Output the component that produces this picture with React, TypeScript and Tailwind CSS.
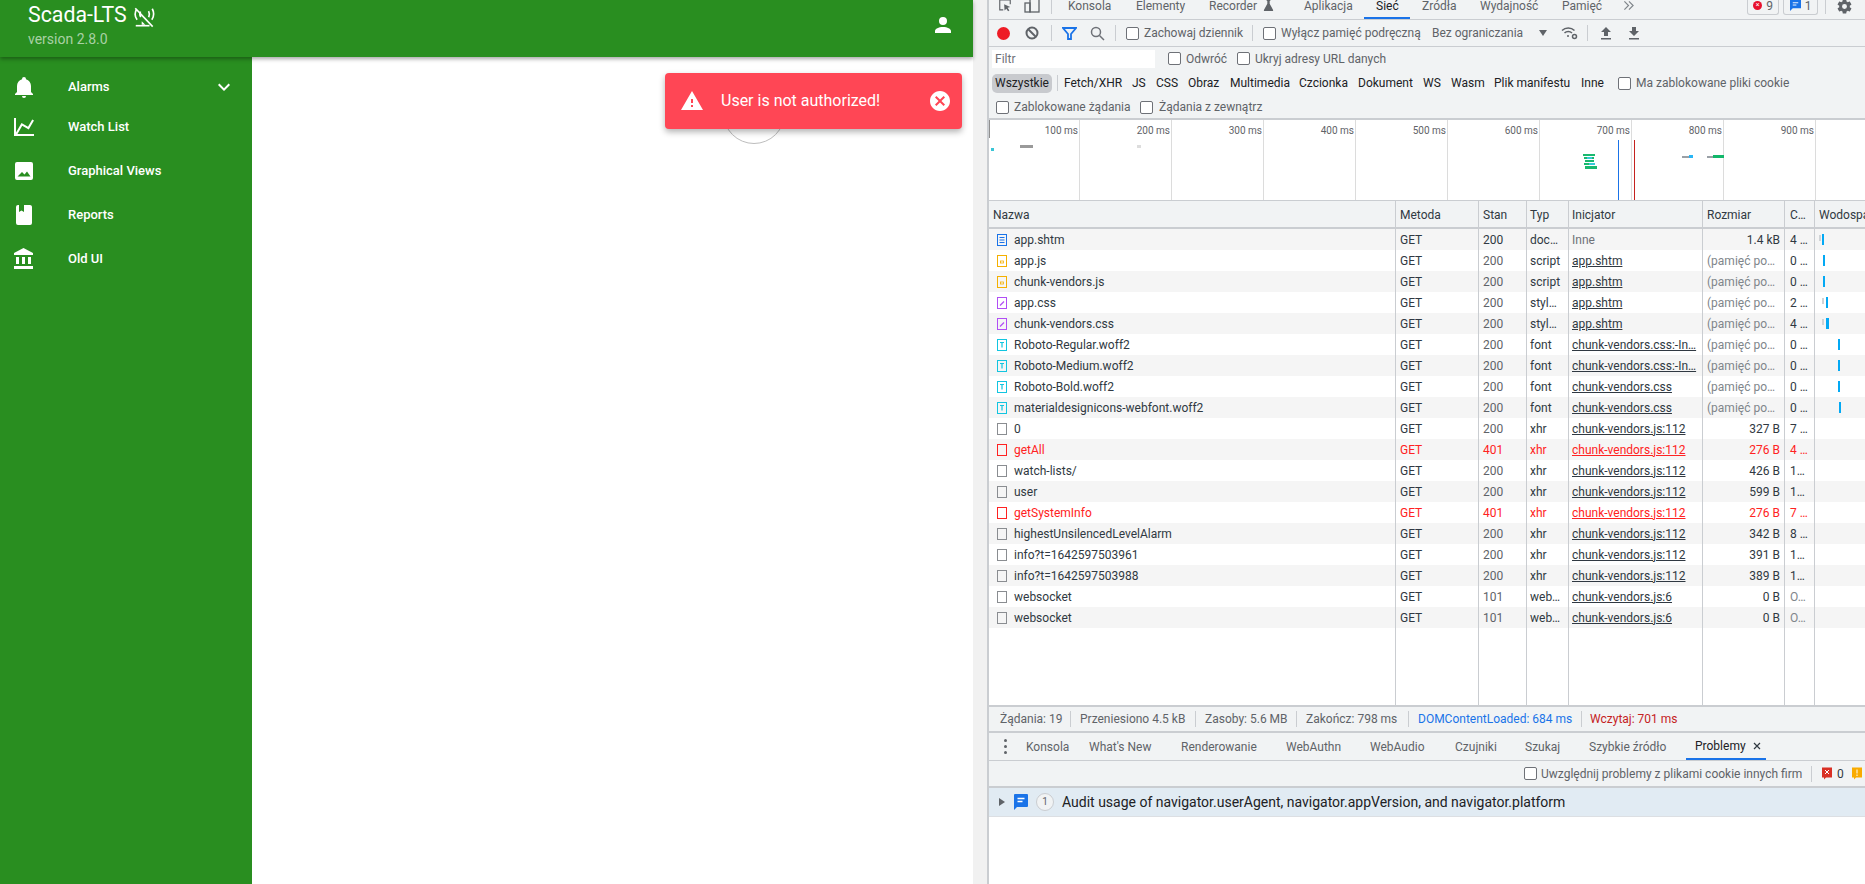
import type { ReactNode } from 'react';

// mdi paths
const mdi = {
  bell: 'M21,19V20H3V19L5,17V11C5,7.9 7.03,5.17 10,4.29C10,4.19 10,4.1 10,4A2,2 0 0,1 12,2A2,2 0 0,1 14,4C14,4.1 14,4.19 14,4.29C16.97,5.17 19,7.9 19,11V17L21,19M14,21A2,2 0 0,1 12,23A2,2 0 0,1 10,21',
  chart: 'M16,11.78L20.24,4.45L21.97,5.45L16.74,14.5L10.23,10.75L5.46,19H22V21H2V3H4V17.54L9.5,8L16,11.78Z',
  image: 'M19 3a2 2 0 0 1 2 2v14a2 2 0 0 1-2 2H5a2 2 0 0 1-2-2V5a2 2 0 0 1 2-2h14zM5.500 17.500h13l-3.500-5-2.500 3-2.500-2.500z',
  book: 'M18,22A2,2 0 0,0 20,20V4C20,2.89 19.1,2 18,2H12V9L9.5,7.5L7,9V2H6A2,2 0 0,0 4,4V20A2,2 0 0,0 6,22H18Z',
  bank: 'M11.5,1L2,6V8H21V6M16,10V17H19V10M2,22H21V19H2M10,10V17H13V10M4,10V17H7V10H4Z',
  account: 'M12,4A4,4 0 0,1 16,8A4,4 0 0,1 12,12A4,4 0 0,1 8,8A4,4 0 0,1 12,4M12,14C16.42,14 20,15.79 20,18V20H4V18C4,15.79 7.58,14 12,14Z',
  alert: 'M13,14H11V10H13M13,18H11V16H13M1,21H23L12,2L1,21Z',
  closeCircle: 'M12,2C17.53,2 22,6.47 22,12C22,17.53 17.53,22 12,22C6.47,22 2,17.53 2,12C2,6.47 6.47,2 12,2M15.59,7L12,10.59L8.41,7L7,8.41L10.59,12L7,15.59L8.41,17L12,13.41L15.59,17L17,15.59L13.41,12L17,8.41L15.59,7Z',
  chevron: 'M7.41,8.58L12,13.17L16.59,8.58L18,10L12,16L6,10L7.41,8.58Z',
  cog: 'M12,15.5A3.5,3.5 0 0,1 8.5,12A3.5,3.5 0 0,1 12,8.5A3.5,3.5 0 0,1 15.5,12A3.5,3.5 0 0,1 12,15.5M19.43,12.97C19.47,12.65 19.5,12.33 19.5,12C19.5,11.67 19.47,11.34 19.43,11L21.54,9.37C21.73,9.22 21.78,8.95 21.66,8.73L19.66,5.27C19.54,5.05 19.27,4.96 19.05,5.05L16.56,6.05C16.04,5.66 15.5,5.32 14.87,5.07L14.5,2.42C14.46,2.18 14.25,2 14,2H10C9.75,2 9.54,2.18 9.5,2.42L9.13,5.07C8.5,5.32 7.96,5.66 7.44,6.05L4.95,5.05C4.73,4.96 4.46,5.05 4.34,5.27L2.34,8.73C2.21,8.95 2.27,9.22 2.46,9.37L4.57,11C4.53,11.34 4.5,11.67 4.5,12C4.5,12.33 4.53,12.65 4.57,12.97L2.46,14.63C2.27,14.78 2.21,15.05 2.34,15.27L4.34,18.73C4.46,18.95 4.73,19.03 4.95,18.95L7.44,17.94C7.96,18.34 8.5,18.68 9.13,18.93L9.5,21.58C9.54,21.82 9.75,22 10,22H14C14.25,22 14.46,21.82 14.5,21.58L14.87,18.93C15.5,18.67 16.04,18.34 16.56,17.94L19.05,18.95C19.27,19.03 19.54,18.95 19.66,18.73L21.66,15.27C21.78,15.05 21.73,14.78 21.54,14.63L19.43,12.97Z',
};

function Mdi({ d, className }: { d: string; className?: string }) {
  return (
    <svg viewBox="0 0 24 24" fill="currentColor" className={className}>
      <path d={d} />
    </svg>
  );
}

function Check({ className = '' }: { className?: string }) {
  return <span className={`size-[13px] shrink-0 rounded-[2px] border border-[#6e7177] bg-white ${className}`} />;
}

function Sep({ className = '' }: { className?: string }) {
  return <span className={`h-4 w-px shrink-0 bg-[#cacdd1] ${className}`} />;
}

const navItems = [
  { icon: mdi.bell, label: 'Alarms', h: 'h-[40px]', arrow: true },
  { icon: mdi.chart, label: 'Watch List', h: 'h-[40px] mb-[2px]' },
  { icon: mdi.image, label: 'Graphical Views', h: 'h-[44px]' },
  { icon: mdi.book, label: 'Reports', h: 'h-[44px]' },
  { icon: mdi.bank, label: 'Old UI', h: 'h-[44px]' },
];

function ScadaPage() {
  return (
    <div className="flex w-[973px] shrink-0 flex-col bg-white">
      <header className="relative z-10 flex h-[57px] shrink-0 items-start justify-between bg-[#298e20] pl-[28px] pr-[18px] text-white shadow-[0_2px_4px_rgba(0,0,0,0.35)]">
        <div>
          <div className="flex h-[30px] items-center text-[21.3px] leading-[30px]">
            Scada-LTS
            <svg viewBox="0 0 24 24" className="ml-[6px] mt-[3px] size-[22px]" fill="none" stroke="currentColor" strokeWidth="1.800">
              <path d="M2.500 2.500l19 20" />
              <path d="M4 3.500c-2.200 3.500-2 8 .5 11.500" />
              <path d="M21 3c2 3.800 1.800 8.500-.5 12" />
              <path d="M17 5.500c1.200 2.300 1.200 4.500.2 6.800" />
              <path d="M8.200 6c-1 2-1 4 .3 6" />
              <path d="M3 21.500h15" />
              <path d="M9.500 20.500v-4l4 4z" fill="currentColor" stroke="none" />
            </svg>
          </div>
          <div className="mt-px text-[14px] leading-[16px] text-white/60">version 2.8.0</div>
        </div>
        <Mdi d={mdi.account} className="mt-[13px] size-6" />
      </header>

      <div className="flex flex-1">
        <nav className="w-[252px] shrink-0 bg-[#298e20] pt-[10px] text-white">
          {navItems.map((item) => (
            <div key={item.label} className={`flex items-center ${item.h}`}>
              <Mdi d={item.icon} className="ml-[12px] size-6 shrink-0" />
              <span className="ml-[32px] flex-1 text-[13px] font-medium">{item.label}</span>
              {item.arrow && <Mdi d={mdi.chevron} className="mr-[16px] size-6" />}
            </div>
          ))}
        </nav>

        <main className="relative flex-1 pl-[471px] pt-[25px]">
          <div className="size-[62px] rounded-full border border-[#bdbdbd]" />
          <div className="absolute left-[413px] top-[16px] flex h-[56px] w-[297px] items-center rounded bg-[#ff4655] text-white shadow-[0_3px_6px_rgba(0,0,0,0.3)]">
            <Mdi d={mdi.alert} className="ml-[15px] size-6 shrink-0" />
            <span className="ml-[17px] flex-1 text-[16px]">User is not authorized!</span>
            <Mdi d={mdi.closeCircle} className="mr-[10px] size-6 shrink-0" />
          </div>
        </main>
      </div>
    </div>
  );
}

function DevTab({ className, children }: { className: string; children: ReactNode }) {
  return <span className={`flex h-[19px] shrink-0 items-start leading-[12px] ${className}`}>{children}</span>;
}

function TopTabs() {
  return (
    <div className="flex h-[20px] shrink-0 items-start overflow-hidden border-b border-[#cacdd1] pl-[9px] text-[#5f6368]">
      <svg viewBox="0 0 16 16" className="mr-[12px] size-[14px] shrink-0 -translate-y-[1px]" fill="none" stroke="#5f6368" strokeWidth="1.3">
        <path d="M6 12.5H2V1h12v5" strokeDasharray="none" />
        <path d="M7 6l7 3-3 1 2 3-1.500 1-2-3-2 2z" fill="#5f6368" stroke="none" />
      </svg>
      <svg viewBox="0 0 16 16" className="mr-[11px] size-[16px] shrink-0 -translate-y-[2px]" fill="none" stroke="#5f6368" strokeWidth="1.3">
        <rect x="6" y="0" width="9" height="14" />
        <rect x="1" y="5" width="5" height="9" />
      </svg>
      <Sep className="mr-[16px] h-[14px]" />
      <DevTab className="w-[68px]">Konsola</DevTab>
      <DevTab className="w-[73px]">Elementy</DevTab>
      <DevTab className="w-[95px]">
        Recorder
        <svg viewBox="0 0 12 12" className="ml-[6px] size-[11px]" fill="#5f6368">
          <path d="M4 0h4v1H7.300v3L11 11v1H1v-1l3.700-7V1H4z" />
        </svg>
      </DevTab>
      <DevTab className="w-[60px]">Aplikacja</DevTab>
      <DevTab className="w-[46px] border-b-2 border-[#1a73e8] pl-[12px] text-[#202124]">Sieć</DevTab>
      <DevTab className="w-[70px] pl-[12px]">Źródła</DevTab>
      <DevTab className="w-[82px]">Wydajność</DevTab>
      <DevTab className="w-[61px]">Pamięć</DevTab>
      <DevTab className="w-[124px] text-[#8a8d91]">
        <svg viewBox="0 0 12 12" className="size-[11px]" fill="none" stroke="#80868b" strokeWidth="1.300">
          <path d="M1.500 1.500L6 6l-4.500 4.500M6.500 1.500L11 6l-4.500 4.500" />
        </svg>
      </DevTab>
      <span className="flex h-[15px] w-[32px] shrink-0 items-start justify-center gap-[4px] rounded-b-[3px] border border-t-0 border-[#cacdd1] leading-[12px]">
        <span className="mt-[1px] flex size-[9px] items-center justify-center rounded-full bg-[#e8112d] text-[7px] leading-none text-white">×</span>
        9
      </span>
      <span className="ml-[4px] flex h-[15px] w-[35px] shrink-0 items-start justify-center gap-[4px] rounded-b-[3px] border border-t-0 border-[#cacdd1] leading-[12px]">
        <svg viewBox="0 0 12 12" className="size-[11px]">
          <path d="M0 0h12v9H3l-3 3z" fill="#1a73e8" />
          <path d="M3 3h6M3 5.500h4" stroke="#fff" />
        </svg>
        1
      </span>
      <Sep className="ml-[7px] mr-[10px] h-[14px]" />
      <Mdi d={mdi.cog} className="size-[17px] -translate-y-[2px] text-[#5f6368]" />
    </div>
  );
}

function RecordBar() {
  return (
    <div className="flex h-[27px] shrink-0 items-center border-b border-[#cacdd1] pl-[8px] text-[#5f6368]">
      <span className="size-[13px] shrink-0 rounded-full bg-[#ee1c25]" />
      <svg viewBox="0 0 14 14" className="ml-[15px] size-[14px] shrink-0" fill="none" stroke="#5f6368" strokeWidth="2">
        <circle cx="7" cy="7" r="5.500" />
        <path d="M3 3l8 8" />
      </svg>
      <Sep className="ml-[12px]" />
      <svg viewBox="0 0 15 13" className="ml-[10px] h-[13px] w-[15px] shrink-0" fill="none" stroke="#1a73e8" strokeWidth="1.800">
        <path d="M1 1h13L9 7v5H6V7z" />
      </svg>
      <svg viewBox="0 0 15 15" className="ml-[13px] size-[15px] shrink-0" fill="none" stroke="#6e7177" strokeWidth="1.500">
        <circle cx="6" cy="6" r="4.500" />
        <path d="M9.500 9.500L14 14" />
      </svg>
      <Sep className="ml-[10px]" />
      <Check className="ml-[10px]" />
      <span className="ml-[5px] w-[108px] shrink-0">Zachowaj dziennik</span>
      <Sep />
      <Check className="ml-[10px]" />
      <span className="ml-[5px] w-[151px] shrink-0">Wyłącz pamięć podręczną</span>
      <span className="w-[107px] shrink-0">Bez ograniczania</span>
      <span className="h-0 w-0 shrink-0 border-x-[4px] border-t-[6px] border-x-transparent border-t-[#5f6368]" />
      <svg viewBox="0 0 17 14" className="ml-[14px] h-[14px] w-[17px] shrink-0" fill="none" stroke="#5f6368" strokeWidth="1.500">
        <path d="M1 4.500c3.500-3.500 9-3.500 12.500 0M3.500 7c2-2 5.500-2 7.500 0" />
        <circle cx="7" cy="10" r="1" fill="#5f6368" stroke="none" />
        <circle cx="13.500" cy="10.500" r="2" />
      </svg>
      <Sep className="ml-[9px]" />
      <svg viewBox="0 0 12 14" className="ml-[12px] h-[14px] w-[12px] shrink-0" fill="#5f6368">
        <path d="M6 1l5 5H8v4H4V6H1zM1 12h10v1.500H1z" />
      </svg>
      <svg viewBox="0 0 12 14" className="ml-[16px] h-[14px] w-[12px] shrink-0" fill="#5f6368">
        <path d="M4 1h4v4h3l-5 5-5-5h3zM1 12h10v1.500H1z" />
      </svg>
    </div>
  );
}

const typeFilters = [
  { label: 'Fetch/XHR', w: 'w-[68px]' },
  { label: 'JS', w: 'w-[24px]' },
  { label: 'CSS', w: 'w-[32px]' },
  { label: 'Obraz', w: 'w-[42px]' },
  { label: 'Multimedia', w: 'w-[69px]' },
  { label: 'Czcionka', w: 'w-[59px]' },
  { label: 'Dokument', w: 'w-[65px]' },
  { label: 'WS', w: 'w-[28px]' },
  { label: 'Wasm', w: 'w-[43px]' },
  { label: 'Plik manifestu', w: 'w-[87px]' },
  { label: 'Inne', w: 'w-[37px]' },
];

function FilterBars() {
  return (
    <>
      <div className="flex h-[24px] shrink-0 items-center pb-[1px] pl-[3px] text-[#5f6368]">
        <span className="flex h-[18px] w-[163px] shrink-0 items-center bg-white pl-[3px] text-[#6e7177]">Filtr</span>
        <Check className="ml-[13px]" />
        <span className="ml-[5px] w-[51px] shrink-0">Odwróć</span>
        <Check />
        <span className="ml-[5px]">Ukryj adresy URL danych</span>
      </div>
      <div className="flex h-[25px] shrink-0 items-center pb-[1px] pl-[3px] text-[#202124]">
        <span className="flex h-[19px] w-[60px] shrink-0 items-center justify-center rounded-[5px] bg-[#c8cace]">Wszystkie</span>
        <Sep className="ml-[5px] mr-[6px]" />
        {typeFilters.map((f) => (
          <span key={f.label} className={`shrink-0 ${f.w}`}>
            {f.label}
          </span>
        ))}
        <Check />
        <span className="ml-[5px] text-[#5f6368]">Ma zablokowane pliki cookie</span>
      </div>
      <div className="flex h-[24px] shrink-0 items-start border-b-2 border-[#cacdd1] pl-[7px] pt-[4px] text-[#5f6368]">
        <Check className="mt-[1px]" />
        <span className="ml-[5px] w-[126px] shrink-0">Zablokowane żądania</span>
        <Check className="mt-[1px]" />
        <span className="ml-[6px]">Żądania z zewnątrz</span>
      </div>
    </>
  );
}

const ticks = [
  { label: '100 ms', w: 'w-[91px]' },
  { label: '200 ms', w: 'w-[92px]' },
  { label: '300 ms', w: 'w-[92px]' },
  { label: '400 ms', w: 'w-[92px]' },
  { label: '500 ms', w: 'w-[92px]' },
  { label: '600 ms', w: 'w-[92px]' },
  { label: '700 ms', w: 'w-[92px]' },
  { label: '800 ms', w: 'w-[92px]' },
  { label: '900 ms', w: 'w-[92px]' },
];

function Overview() {
  return (
    <div className="relative flex h-[81px] shrink-0 border-b border-[#cacdd1] bg-white">
      {ticks.map((t) => (
        <div key={t.label} className={`h-full shrink-0 border-r border-[#dcdcdc] pr-[1px] pt-[4px] text-right text-[10px] leading-[14px] text-[#5f6368] ${t.w}`}>
          {t.label}
        </div>
      ))}
      {/* activity marks, x/y are chart coordinates */}
      <svg viewBox="0 0 876 80" className="absolute left-0 top-0 h-[80px] w-[876px]">
        <rect x="-1" y="0" width="2" height="18" fill="#8f8f8f" />
        <rect x="2" y="28" width="3" height="3" fill="#39c5d6" />
        <rect x="31" y="25" width="13" height="3" fill="#9a9a9a" />
        <rect x="148" y="25" width="4" height="3" fill="#dddddd" />
        <path d="M594 34h12v2h-12zM595 37h10v2h-10zM596 40h9v2h-9zM595 43h11v2h-11zM596 46h12v3h-12z" fill="#19b96f" />
        <path d="M598 37h5v2h-5zM600 43h6v2h-6z" fill="#35c9d8" />
        <rect x="693" y="36" width="7" height="2" fill="#9aa0a6" />
        <rect x="700" y="35" width="4" height="3" fill="#29b6f6" />
        <rect x="718" y="36" width="6" height="2" fill="#9aa0a6" />
        <rect x="724" y="35" width="11" height="3" fill="#12b76a" />
        <rect x="629" y="20" width="1" height="60" fill="#1a73e8" />
        <rect x="645" y="20" width="1" height="60" fill="#c5221f" />
      </svg>
    </div>
  );
}

const gridCols = 'grid grid-cols-[407px_83px_48px_42px_134px_82px_30px_1fr]';

function RowIcon({ kind }: { kind: string }) {
  if (kind === 'doc')
    return (
      <svg viewBox="0 0 10 12" className="h-[12px] w-[10px] shrink-0" fill="none" stroke="#1a73e8">
        <rect x="0.500" y="0.500" width="9" height="11" />
        <path d="M2.500 3.500h5M2.500 6h5M2.500 8.500h5" />
      </svg>
    );
  if (kind === 'js')
    return (
      <svg viewBox="0 0 10 12" className="h-[12px] w-[10px] shrink-0" fill="none" stroke="#f5b000">
        <rect x="0.500" y="0.500" width="9" height="11" />
        <rect x="3.500" y="6" width="3" height="2" strokeWidth="0.800" />
      </svg>
    );
  if (kind === 'css')
    return (
      <svg viewBox="0 0 10 12" className="h-[12px] w-[10px] shrink-0" fill="none" stroke="#b14ef5">
        <rect x="0.500" y="0.500" width="9" height="11" />
        <path d="M3 8.500L7 4.500" strokeWidth="1.200" />
      </svg>
    );
  if (kind === 'font')
    return (
      <svg viewBox="0 0 10 12" className="h-[12px] w-[10px] shrink-0" fill="none" stroke="#12c5e0">
        <rect x="0.500" y="0.500" width="9" height="11" />
        <path d="M3 3.500h4M5 3.500v5" strokeWidth="1.200" />
      </svg>
    );
  return (
    <svg viewBox="0 0 10 12" className="h-[12px] w-[10px] shrink-0" fill="none" stroke={kind === 'err' ? '#f22' : '#8a8d91'}>
      <rect x="0.500" y="0.500" width="9" height="11" />
    </svg>
  );
}

type Row = {
  name: string;
  kind: string;
  status: string;
  type: string;
  init: string;
  size: string;
  time: string;
  gray?: number;
  blue?: number;
  blueW?: number;
};

const rows: Row[] = [
  { name: 'app.shtm', kind: 'doc', status: '200', type: 'doc…', init: 'Inne', size: '1.4 kB', time: '4 …', gray: 4, blue: 7, blueW: 2 },
  { name: 'app.js', kind: 'js', status: '200', type: 'script', init: 'app.shtm', size: '(pamięć po…', time: '0 …', blue: 8, blueW: 2 },
  { name: 'chunk-vendors.js', kind: 'js', status: '200', type: 'script', init: 'app.shtm', size: '(pamięć po…', time: '0 …', blue: 8, blueW: 2 },
  { name: 'app.css', kind: 'css', status: '200', type: 'styl…', init: 'app.shtm', size: '(pamięć po…', time: '2 …', gray: 7, blue: 11, blueW: 2 },
  { name: 'chunk-vendors.css', kind: 'css', status: '200', type: 'styl…', init: 'app.shtm', size: '(pamięć po…', time: '4 …', gray: 7, blue: 11, blueW: 3 },
  { name: 'Roboto-Regular.woff2', kind: 'font', status: '200', type: 'font', init: 'chunk-vendors.css:-In…', size: '(pamięć po…', time: '0 …', blue: 23, blueW: 2 },
  { name: 'Roboto-Medium.woff2', kind: 'font', status: '200', type: 'font', init: 'chunk-vendors.css:-In…', size: '(pamięć po…', time: '0 …', blue: 23, blueW: 2 },
  { name: 'Roboto-Bold.woff2', kind: 'font', status: '200', type: 'font', init: 'chunk-vendors.css', size: '(pamięć po…', time: '0 …', blue: 23, blueW: 2 },
  { name: 'materialdesignicons-webfont.woff2', kind: 'font', status: '200', type: 'font', init: 'chunk-vendors.css', size: '(pamięć po…', time: '0 …', blue: 24, blueW: 2 },
  { name: '0', kind: 'other', status: '200', type: 'xhr', init: 'chunk-vendors.js:112', size: '327 B', time: '7 …' },
  { name: 'getAll', kind: 'err', status: '401', type: 'xhr', init: 'chunk-vendors.js:112', size: '276 B', time: '4 …' },
  { name: 'watch-lists/', kind: 'other', status: '200', type: 'xhr', init: 'chunk-vendors.js:112', size: '426 B', time: '1…' },
  { name: 'user', kind: 'other', status: '200', type: 'xhr', init: 'chunk-vendors.js:112', size: '599 B', time: '1…' },
  { name: 'getSystemInfo', kind: 'err', status: '401', type: 'xhr', init: 'chunk-vendors.js:112', size: '276 B', time: '7 …' },
  { name: 'highestUnsilencedLevelAlarm', kind: 'other', status: '200', type: 'xhr', init: 'chunk-vendors.js:112', size: '342 B', time: '8 …' },
  { name: 'info?t=1642597503961', kind: 'other', status: '200', type: 'xhr', init: 'chunk-vendors.js:112', size: '391 B', time: '1…' },
  { name: 'info?t=1642597503988', kind: 'other', status: '200', type: 'xhr', init: 'chunk-vendors.js:112', size: '389 B', time: '1…' },
  { name: 'websocket', kind: 'other', status: '101', type: 'web…', init: 'chunk-vendors.js:6', size: '0 B', time: 'O…' },
  { name: 'websocket', kind: 'other', status: '101', type: 'web…', init: 'chunk-vendors.js:6', size: '0 B', time: 'O…' },
];

const cell = 'flex items-center overflow-hidden whitespace-nowrap border-r border-[#cacdd1]';

const headers = [
  { label: 'Nazwa', pl: 'pl-[4px]' },
  { label: 'Metoda', pl: 'pl-[4px]' },
  { label: 'Stan', pl: 'pl-[4px]' },
  { label: 'Typ', pl: 'pl-[3px]' },
  { label: 'Inicjator', pl: 'pl-[3px]' },
  { label: 'Rozmiar', pl: 'pl-[4px]' },
  { label: 'C…', pl: 'pl-[5px]' },
];

function RequestTable() {
  return (
    <div className="flex min-h-0 flex-1 flex-col bg-white">
      <div className={`h-[28px] shrink-0 border-b-2 border-[#cacdd1] bg-[#f1f3f4] text-[#303942] ${gridCols}`}>
        {headers.map((h) => (
          <div key={h.label} className={`${cell} pt-px ${h.pl}`}>
            {h.label}
          </div>
        ))}
        <div className="flex items-center overflow-hidden whitespace-nowrap pl-[4px] pt-px">Wodospad</div>
      </div>
      {rows.map((r, i) => {
        const err = r.kind === 'err';
        return (
          <div key={i} className={`h-[21px] shrink-0 ${gridCols} ${i % 2 === 0 ? 'bg-[#f5f5f5]' : 'bg-white'} ${err ? 'text-[#f22]' : 'text-[#303942]'}`}>
            <div className={`${cell} pl-[8px]`}>
              <RowIcon kind={r.kind} />
              <span className="ml-[7px]">{r.name}</span>
            </div>
            <div className={`${cell} pl-[4px]`}>GET</div>
            <div className={`${cell} pl-[4px] ${err ? '' : i === 0 ? '' : 'text-[#5f6368]'}`}>{r.status}</div>
            <div className={`${cell} pl-[3px]`}>{r.type}</div>
            <div className={`${cell} pl-[3px] ${r.init === 'Inne' ? 'text-[#6e7177]' : 'underline'}`}>{r.init}</div>
            <div className={`${cell} pl-[4px] pr-[4px] ${r.size.startsWith('(') ? 'justify-start text-[#80868b]' : 'justify-end'}`}>{r.size}</div>
            <div className={`${cell} pl-[5px] ${r.time === 'O…' ? 'text-[#80868b]' : ''}`}>{r.time}</div>
            <div className="relative">
              {r.gray !== undefined && (
                <span className="absolute top-[6px] h-[6px] w-[2px] bg-[#d0d3d6]" style={{ left: r.gray }} />
              )}
              {r.blue !== undefined && (
                <span className="absolute top-[5px] h-[11px] bg-[#03a9f4]" style={{ left: r.blue, width: r.blueW }} />
              )}
            </div>
          </div>
        );
      })}
      <div className={`flex-1 ${gridCols}`}>
        <div className="border-r border-[#cacdd1]" />
        <div className="border-r border-[#cacdd1]" />
        <div className="border-r border-[#cacdd1]" />
        <div className="border-r border-[#cacdd1]" />
        <div className="border-r border-[#cacdd1]" />
        <div className="border-r border-[#cacdd1]" />
        <div className="border-r border-[#cacdd1]" />
      </div>
    </div>
  );
}

function StatusBar() {
  return (
    <div className="flex h-[28px] shrink-0 items-center border-y-2 border-[#cacdd1] pl-[11px] text-[#5f6368]">
      <span className="w-[70px] shrink-0">Żądania: 19</span>
      <Sep />
      <span className="ml-[9px] w-[115px] shrink-0">Przeniesiono 4.5 kB</span>
      <Sep />
      <span className="ml-[9px] w-[91px] shrink-0">Zasoby: 5.6 MB</span>
      <Sep />
      <span className="ml-[9px] w-[102px] shrink-0">Zakończ: 798 ms</span>
      <Sep />
      <span className="ml-[9px] w-[163px] shrink-0 text-[#1a73e8]">DOMContentLoaded: 684 ms</span>
      <Sep />
      <span className="ml-[8px] text-[#c5221f]">Wczytaj: 701 ms</span>
    </div>
  );
}

const bottomTabs = [
  { label: 'Konsola', w: 'w-[63px]' },
  { label: "What's New", w: 'w-[92px]' },
  { label: 'Renderowanie', w: 'w-[105px]' },
  { label: 'WebAuthn', w: 'w-[84px]' },
  { label: 'WebAudio', w: 'w-[85px]' },
  { label: 'Czujniki', w: 'w-[70px]' },
  { label: 'Szukaj', w: 'w-[64px]' },
  { label: 'Szybkie źródło', w: 'w-[97px]' },
];

function DrawerTabs() {
  return (
    <div className="flex h-[28px] shrink-0 items-center border-b border-[#cacdd1] pl-[15px] text-[#5f6368]">
      <span className="mr-[19px] flex w-[3px] shrink-0 flex-col gap-[3px]">
        <span className="size-[3px] rounded-full bg-[#5f6368]" />
        <span className="size-[3px] rounded-full bg-[#5f6368]" />
        <span className="size-[3px] rounded-full bg-[#5f6368]" />
      </span>
      {bottomTabs.map((t) => (
        <span key={t.label} className={`shrink-0 ${t.w}`}>
          {t.label}
        </span>
      ))}
      <span className="flex h-full w-[80px] shrink-0 items-center border-b-2 border-[#1a73e8] pl-[9px] text-[#202124]">
        Problemy
        <svg viewBox="0 0 8 8" className="ml-[7px] size-[8px]" fill="none" stroke="#303942" strokeWidth="1.200">
          <path d="M1 1l6 6M7 1L1 7" />
        </svg>
      </span>
    </div>
  );
}

function IssuesPanel() {
  return (
    <>
      <div className="flex h-[27px] shrink-0 items-center border-b-2 border-[#cacdd1] pl-[535px] text-[#5f6368]">
        <Check />
        <span className="ml-[4px] w-[270px] shrink-0">Uwzględnij problemy z plikami cookie innych firm</span>
        <Sep />
        <svg viewBox="0 0 10 12" className="ml-[10px] h-[13px] w-[10px] shrink-0">
          <path d="M0 0h10v10H4l-2 2v-2H0z" fill="#d93025" />
          <path d="M3 2.500l4 4M7 2.500l-4 4" stroke="#fff" />
        </svg>
        <span className="ml-[5px] text-[#303942]">0</span>
        <svg viewBox="0 0 10 12" className="ml-[8px] h-[13px] w-[10px] shrink-0">
          <path d="M0 0h10v10H4l-2 2v-2H0z" fill="#f9ab00" />
          <path d="M5 2v4M5 7v1.500" stroke="#fff" />
        </svg>
      </div>
      <div className="flex h-[29px] shrink-0 items-center border-b border-[#dcdfe3] bg-[#e1ebf3] pl-[10px] text-[14px] text-[#202124]">
        <span className="h-0 w-0 shrink-0 border-y-[4px] border-l-[6px] border-y-transparent border-l-[#5f6368]" />
        <svg viewBox="0 0 14 16" className="ml-[9px] h-[16px] w-[14px] shrink-0">
          <path d="M1 0h12a1 1 0 0 1 1 1v11a1 1 0 0 1-1 1H3l-3 3V1a1 1 0 0 1 1-1z" fill="#1a73e8" />
          <path d="M3.500 4.500h7M3.500 7.500h5" stroke="#fff" strokeWidth="1.500" />
        </svg>
        <span className="ml-[8px] flex size-[18px] shrink-0 items-center justify-center rounded-full border border-[#cacdd1] bg-[#f1f3f4] text-[10px] text-[#5f6368]">1</span>
        <span className="ml-[8px]">Audit usage of navigator.userAgent, navigator.appVersion, and navigator.platform</span>
      </div>
    </>
  );
}

function DevTools() {
  return (
    <div className="flex min-w-0 flex-1 flex-col border-l-2 border-[#cacdd1] bg-[#f1f3f4] text-[12px] leading-[14px]">
      <TopTabs />
      <RecordBar />
      <FilterBars />
      <Overview />
      <RequestTable />
      <StatusBar />
      <DrawerTabs />
      <IssuesPanel />
      <div className="h-[67px] shrink-0 bg-white" />
    </div>
  );
}

export default function App() {
  return (
    <div className="flex h-[884px] w-[1865px] overflow-hidden [font-family:Roboto,sans-serif]">
      <ScadaPage />
      <div className="w-[14px] shrink-0 bg-[#f1f1f1]" />
      <DevTools />
    </div>
  );
}
